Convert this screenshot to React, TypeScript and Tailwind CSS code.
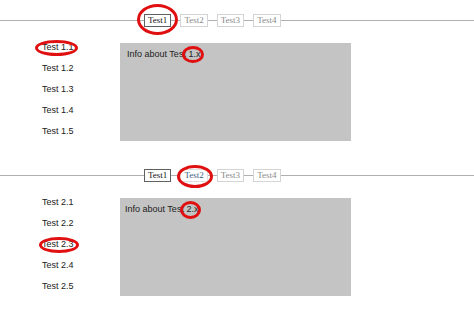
import React from "react";

type Ring = { x: number; y: number; w: number; h: number };

const tabs = ["Test1", "Test2", "Test3", "Test4"];

const Ellipse = ({ x, y, w, h }: Ring) => (
  <div
    className="absolute rounded-[50%] border-[3px] border-[#e01010] pointer-events-none"
    style={{ left: x, top: y, width: w, height: h }}
  />
);

const TabBar = ({ hovered }: { hovered?: number }) => (
  <div className="flex items-center h-[14px]">
    <div className="w-[144px] h-px bg-[#b0b0b0]" />
    {tabs.map((t, i) => (
      <React.Fragment key={t}>
        {i > 0 && <div className="w-[9px] h-px bg-[#b0b0b0]" />}
        <div
          className={
            i === 0
              ? "h-[13px] px-[3px] border border-[#606060] text-[9px] leading-[11px] text-[#111]"
              : hovered === i
              ? "h-[13px] px-[3px] border border-[#e0e0e0] text-[9px] leading-[11px] text-[#3f5c86]"
              : "h-[13px] px-[3px] border border-[#d4d4d4] text-[9px] leading-[11px] text-[#8a8a8a]"
          }
          style={{ fontFamily: '"Liberation Serif", "Times New Roman", serif' }}
        >
          {t}
        </div>
      </React.Fragment>
    ))}
    <div className="flex-1 h-px bg-[#b0b0b0]" />
  </div>
);

const Section = ({ n, padLeft }: { n: number; padLeft: string }) => (
  <div>
    <TabBar hovered={n === 2 ? 1 : undefined} />
    <div className="flex mt-[10px]">
      <ul className="w-[120px] pl-[42px]">
        {[1, 2, 3, 4, 5].map((k) => (
          <li key={k} className="h-[21px] leading-[21px] text-[9px] text-[#222]">
            Test {n}.{k}
          </li>
        ))}
      </ul>
      <div className={`mt-[6px] w-[231px] h-[98px] bg-[#c4c4c4] pt-[5px] text-[9px] text-[#222] ${padLeft}`}>
        Info about Test {n}.x
      </div>
    </div>
  </div>
);

export default function App() {
  return (
    <div
      className="relative w-[474px] h-[328px] bg-white overflow-hidden pt-[13px]"
      style={{ fontFamily: '"Liberation Sans", Arial, sans-serif' }}
    >
      <Section n={1} padLeft="pl-[7px]" />
      <div className="h-[26px]" />
      <Section n={2} padLeft="pl-[5px]" />

      <Ellipse x={137} y={4} w={41} h={31} />
      <Ellipse x={35} y={40} w={43} h={16} />
      <Ellipse x={182} y={46} w={22} h={17} />
      <Ellipse x={177} y={165} w={36} h={23} />
      <Ellipse x={180} y={201} w={21} h={18} />
      <Ellipse x={39} y={237} w={40} h={16} />
    </div>
  );
}
